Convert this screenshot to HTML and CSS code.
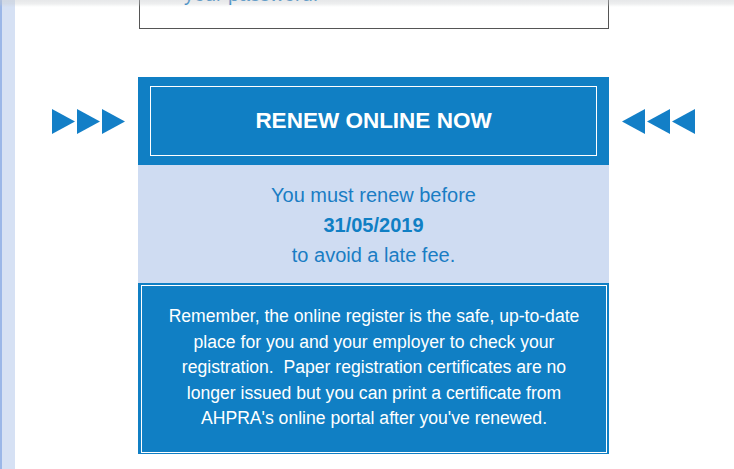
FILE: index.html
```html
<!DOCTYPE html>
<html lang="en">
<head>
<meta charset="utf-8">
<title>Renew online</title>
<link rel="stylesheet" href="styles.css">
</head>
<body>
<div class="page">
  <div class="strip"></div>
  <main class="main">
    <div class="prev-box">
      <ul class="prev-list">
        <li>your password.</li>
      </ul>
    </div>

    <div class="arrows arrows-left" aria-hidden="true">
      <svg width="73" height="25" viewBox="0 0 73 25"><polygon points="0,0 23,12.5 0,25"/><polygon points="25,0 48,12.5 25,25"/><polygon points="50,0 73,12.5 50,25"/></svg>
    </div>
    <div class="renew">
      <a class="renew-link" href="#">RENEW ONLINE NOW</a>
    </div>
    <div class="arrows arrows-right" aria-hidden="true">
      <svg width="73" height="25" viewBox="0 0 73 25"><polygon points="23,0 0,12.5 23,25"/><polygon points="48,0 25,12.5 48,25"/><polygon points="73,0 50,12.5 73,25"/></svg>
    </div>

    <div class="deadline">
      <p>You must renew before</p>
      <p class="date">31/05/2019</p>
      <p>to avoid a late fee.</p>
    </div>

    <div class="info">
      <div class="info-inner">
        <p>Remember, the online register is the safe, up-to-date place for you and your employer to check your registration.&nbsp; Paper registration certificates are no longer issued but you can print a certificate from AHPRA's online portal after you've renewed.</p>
      </div>
    </div>
  </main>
</div>
<div class="top-shadow"></div>
</body>
</html>
```

FILE: styles.css
```css
html, body {
  margin: 0;
  padding: 0;
  height: 100%;
  overflow: hidden;
  background: #ffffff;
  font-family: "Liberation Sans", Arial, sans-serif;
}

.page {
  display: flex;
  min-height: 100%;
}

.strip {
  flex: 0 0 13px;
  border-left: 2px solid #9bb7e8;
  background: #d6e1f4;
}

.main {
  display: grid;
  grid-template-columns: 123px 471px 1fr;
  align-content: start;
}

.prev-box {
  grid-column: 2;
  margin: -21px 0 0 1px;
  border: 1px solid #555555;
  border-top: none;
  padding: 0 0 19px 0;
}

.prev-list {
  margin: 0;
  padding: 0 0 0 44px;
  list-style: none;
  color: #1a7dc4;
  font-size: 19.8px;
  line-height: 30px;
}

.prev-list li {
  position: relative;
}

.prev-list li::before {
  content: "\2022";
  position: absolute;
  left: -25px;
}

.arrows {
  grid-row: 2;
  margin-top: 48px;
  display: flex;
  align-items: center;
}

.arrows svg {
  display: block;
  fill: #137fc7;
}

.arrows-left {
  grid-column: 1;
  justify-content: flex-end;
  padding-right: 13px;
}

.arrows-right {
  grid-column: 3;
  padding-left: 13px;
}

.renew {
  grid-column: 2;
  grid-row: 2;
  margin-top: 48px;
  background: #107fc4;
  padding: 9px 12px;
}

.renew-link {
  display: flex;
  align-items: center;
  justify-content: center;
  height: 68px;
  border: 1px solid #ffffff;
  color: #ffffff;
  text-decoration: none;
  font-weight: bold;
  font-size: 22.5px;
}

.deadline {
  grid-column: 2;
  background: #cfdcf2;
  padding: 15px 0 13px;
  text-align: center;
  color: #1a7dc4;
  font-size: 20px;
  line-height: 30px;
}

.deadline p {
  margin: 0;
}

.deadline .date {
  font-weight: bold;
  color: #107fc4;
}

.info {
  grid-column: 2;
  background: #107fc4;
  padding: 2px 2px 1px 3px;
}

.info-inner {
  border: 1px solid #ffffff;
  padding: 18px 23px 20px;
  text-align: center;
  color: #ffffff;
  font-size: 17.6px;
  line-height: 25.6px;
}

.info-inner p {
  margin: 0;
}

.top-shadow {
  position: fixed;
  top: 0;
  left: 0;
  right: 0;
  height: 7px;
  background: linear-gradient(to bottom, rgba(200, 203, 206, 0.45) 0, rgba(200, 203, 206, 0.3) 4px, rgba(200, 203, 206, 0) 7px);
  pointer-events: none;
}
```
